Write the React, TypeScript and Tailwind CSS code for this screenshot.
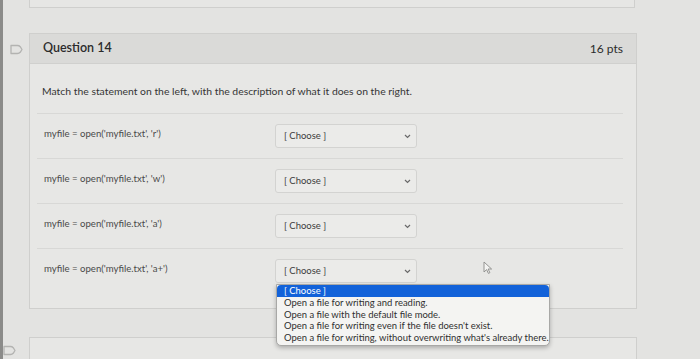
import React from 'react';

const rows = [
  "myfile = open('myfile.txt', 'r')",
  "myfile = open('myfile.txt', 'w')",
  "myfile = open('myfile.txt', 'a')",
  "myfile = open('myfile.txt', 'a+')",
];

const options = [
  '[ Choose ]',
  'Open a file for writing and reading.',
  'Open a file with the default file mode.',
  "Open a file for writing even if the file doesn't exist.",
  "Open a file for writing, without overwriting what's already there.",
];

function Flag() {
  return (
    <svg width="13" height="11" viewBox="0 0 13 11" fill="none">
      <path
        d="M1 1.5h6.5c1.2 0 2 .4 2.7 1.2L12 5.5l-1.8 2.8c-.7.8-1.5 1.2-2.7 1.2H1z"
        stroke="#b3b3b1"
        strokeWidth="1.3"
        strokeLinejoin="round"
      />
    </svg>
  );
}

function Chevron() {
  return (
    <svg width="7" height="5" viewBox="0 0 7 5" fill="none">
      <path d="M1 1l2.5 2.5L6 1" stroke="#6a6a6a" strokeWidth="1.2" />
    </svg>
  );
}

function Select({ open }: { open?: boolean }) {
  return (
    <div className="relative">
      <div className="flex h-[24px] w-[142px] items-center justify-between rounded-[3px] border border-[#d3d3d1] bg-[#ebebe9] pl-[8px] pr-[5px]">
        <span className="text-[9.5px] text-[#3c3c3c]">[ Choose ]</span>
        <Chevron />
      </div>
      {open && (
        <div className="absolute left-px top-[25px] z-10 w-[274px] rounded-b-[5px] border border-[#a8a8a6] bg-[#f4f4f2] pb-px shadow-[0_2px_4px_rgba(0,0,0,0.25)]">
          {options.map((o, i) => (
            <div
              key={o}
              className={
                i === 0
                  ? 'h-[11.8px] rounded-t-[4px] bg-[#1262d9] pl-[7px] text-[9.45px] leading-[11.8px] text-white'
                  : 'h-[11.8px] whitespace-nowrap pl-[7px] text-[9.45px] leading-[11.8px] text-[#2f2f2f]'
              }
            >
              {o}
            </div>
          ))}
        </div>
      )}
    </div>
  );
}

export default function App() {
  return (
    <div className="relative flex h-[359px] w-[700px] overflow-hidden bg-[#e3e3e1] font-['Lato','Open_Sans',sans-serif]">
      <div className="w-[3px] shrink-0 bg-[#8b8b89]" />

      <div className="flex flex-col">
        {/* previous question, bottom edge */}
        <div className="flex">
          <div className="w-[26px] shrink-0" />
          <div className="h-[8px] w-[606px] border-x border-b border-[#cfcfcd] bg-[#e6e6e4]" />
        </div>

        {/* Question 14 */}
        <div className="mt-[25px] flex">
          <div className="w-[26px] shrink-0 pl-[7px] pt-[11px]">
            <Flag />
          </div>
          <div className="w-[608px] border border-[#cfcfcd] bg-[#e7e7e5]">
            <div className="flex h-[30px] items-center justify-between border-b border-[#d0d0ce] bg-[#dadad8] px-[13px]">
              <span className="text-[12.5px] font-semibold text-[#2b2b2b]">Question 14</span>
              <span className="text-[12px] text-[#2b2b2b]">16 pts</span>
            </div>
            <div className="px-[7px] pb-[15px] pt-[20px]">
              <p className="pl-[5px] text-[10.4px] leading-[14px] text-[#363636]">
                Match the statement on the left, with the description of what it does on the right.
              </p>
              <div className="mt-[15px] mr-[6px]">
                {rows.map((r, i) => (
                  <div key={r} className="flex h-[45px] items-start border-t border-[#d8d8d6] pt-[10px]">
                    <div className="w-[238px] pl-[7px] pt-[4px] text-[9.6px] leading-[12px] text-[#4a4a4a]">
                      {r}
                    </div>
                    <Select open={i === 3} />
                  </div>
                ))}
              </div>
            </div>
          </div>
        </div>

        {/* next question */}
        <div className="mt-[28px] flex">
          <div className="w-[26px] shrink-0 pt-[8px]">
            <Flag />
          </div>
          <div className="h-[40px] w-[608px] border border-[#cfcfcd] bg-[#e7e7e5]" />
        </div>
      </div>

      {/* mouse cursor */}
      <svg className="absolute left-[483px] top-[261px]" width="10" height="13" viewBox="0 0 10 13">
        <path d="M1 1v10l2.6-2.4 1.8 3.8 1.5-.7-1.8-3.7H8.6z" fill="#f4f4f2" stroke="#8a8a88" strokeWidth="0.9" strokeLinejoin="round" />
      </svg>
    </div>
  );
}
